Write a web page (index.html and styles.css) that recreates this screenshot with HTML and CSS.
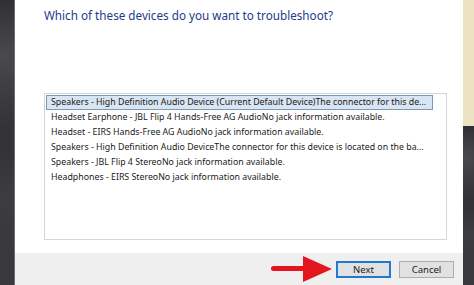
FILE: index.html
```html
<!DOCTYPE html>
<html lang="en">
<head>
    <meta charset="utf-8">
    <title>Playing Audio troubleshooter</title>
    <link rel="stylesheet" href="styles.css">
</head>
<body>
    <div class="desk">
        <div class="stone left-edge"></div>
        <div class="dialog">
            <div class="content">
                <h1 class="heading">Which of these devices do you want to troubleshoot?</h1>
                <ul class="device-list">
                    <li class="selected">Speakers - High Definition Audio Device (Current Default Device)The connector for this de...</li>
                    <li>Headset Earphone - JBL Flip 4 Hands-Free AG AudioNo jack information available.</li>
                    <li>Headset - EIRS Hands-Free AG AudioNo jack information available.</li>
                    <li>Speakers - High Definition Audio DeviceThe connector for this device is located on the ba...</li>
                    <li>Speakers - JBL Flip 4 StereoNo jack information available.</li>
                    <li>Headphones - EIRS StereoNo jack information available.</li>
                </ul>
            </div>
            <div class="footer">
                <svg class="arrow" width="64" height="28" viewBox="0 0 64 28">
                    <rect x="1" y="11" width="35" height="5" rx="2.5" fill="#e3161d"/>
                    <polygon points="33,1 62,14 33,27" fill="#e3161d"/>
                </svg>
                <button class="btn primary">Next</button>
                <button class="btn">Cancel</button>
            </div>
        </div>
        <div class="right-edge">
            <div class="paper"></div>
            <div class="stone"></div>
        </div>
    </div>
</body>
</html>
```

FILE: styles.css
```css
html, body {
    margin: 0;
    height: 100%;
}
body {
    background: #2b2b2e;
    font-family: "Noto Sans", "Open Sans", sans-serif;
}
.desk {
    display: flex;
    height: 285px;
}
.stone {
    background:
        radial-gradient(circle at 30% 20%, #4a4a4e 0, transparent 40%),
        radial-gradient(circle at 70% 70%, #3d3d41 0, transparent 35%),
        linear-gradient(180deg, #1f1f24 0%, #2e2e33 50%, #3a3a3e 100%);
}
.left-edge {
    width: 14px;
    flex: none;
}
.dialog {
    flex: 1;
    min-width: 0;
    display: flex;
    flex-direction: column;
    background: #ffffff;
    border-left: 1px solid #6d6d6d;
}
.content {
    flex: 1;
    min-width: 0;
    padding: 5px 16px 0 29px;
}
.heading {
    margin: 0 0 68px;
    font-size: 11.7px;
    font-weight: normal;
    color: #1e3a8a;
    line-height: 20px;
}
.device-list {
    list-style: none;
    margin: 0;
    padding: 1px 13px 0 1px;
    height: 144px;
    border: 1px solid #d6d6d6;
    font-size: 8.8px;
    color: #1a1a1a;
}
.device-list li {
    height: 13px;
    line-height: 13px;
    padding-left: 4px;
    white-space: nowrap;
    overflow: hidden;
    border: 1px solid transparent;
}
.device-list li.selected {
    background: #d8e5f2;
    border-color: #8298b0;
}
.footer {
    height: 32px;
    flex: none;
    background: #efefef;
    display: flex;
    align-items: center;
    justify-content: flex-end;
    padding-right: 9px;
    gap: 8px;
}
.arrow {
    margin-right: -6px;
}
.btn {
    width: 55px;
    height: 17px;
    padding: 0;
    font-family: inherit;
    font-size: 9.5px;
    color: #1a1a1a;
    background: #e1e1e1;
    border: 1px solid #adadad;
}
.btn.primary {
    border: 2px solid #1f7ad0;
}
.right-edge {
    width: 11px;
    flex: none;
    display: flex;
    flex-direction: column;
}
.paper {
    height: 126px;
    background: #ece3c3;
}
.right-edge .stone {
    flex: 1;
}
```
